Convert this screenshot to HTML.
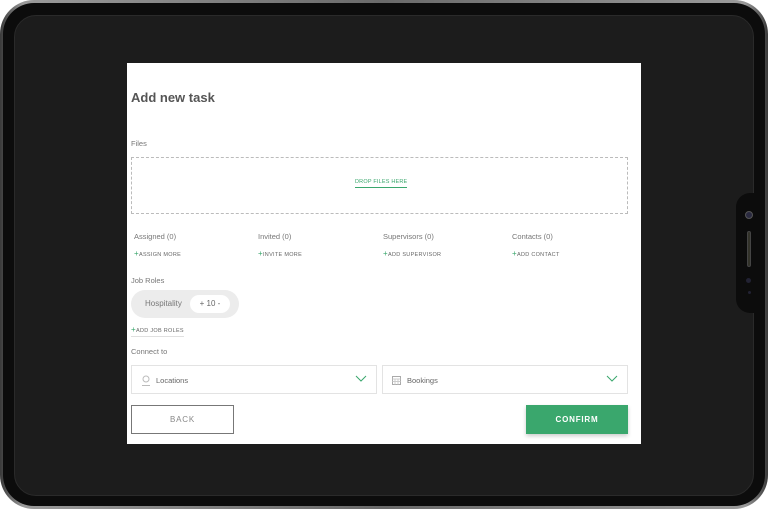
<!DOCTYPE html>
<html><head><meta charset="utf-8"><style>
*{margin:0;padding:0;box-sizing:border-box}
body{width:768px;height:509px;background:#fff;position:relative;overflow:hidden;font-family:"Liberation Sans",sans-serif}
.outer{position:absolute;left:0;top:0;width:768px;height:509px;border-radius:34px;background:linear-gradient(90deg,#3a3a3a,#9a9a9a 3%,#6a6a6a 50%,#9a9a9a 97%,#3a3a3a)}
.rim{position:absolute;left:3px;top:3px;right:3px;bottom:3px;border-radius:31px;background:#0c0c0c}
.inner{position:absolute;left:14px;top:15px;right:14px;bottom:13px;border-radius:22px;background:#1c1c1c;border:1px solid #2a2a2a}
.notch{position:absolute;left:736px;top:193px;width:26px;height:120px;background:#0c0c0c;border-radius:14px 0 0 14px}
.cam{position:absolute;left:745px;top:211px;width:8px;height:8px;border-radius:50%;background:#2a2a40;border:1px solid #555}
.bar{position:absolute;left:747px;top:231px;width:4px;height:36px;border-radius:2px;background:#33332a;border:1px solid #444}
.d1{position:absolute;left:746px;top:278px;width:5px;height:5px;border-radius:50%;background:#223}
.d2{position:absolute;left:748px;top:291px;width:3px;height:3px;border-radius:50%;background:#223}
.screen{position:absolute;left:127px;top:63px;width:514px;height:381px;background:#fff;color:#666}
.a{position:absolute;white-space:nowrap}
h1{position:absolute;left:4px;top:27px;font-size:13px;font-weight:bold;color:#555}
.lbl{font-size:7.5px;color:#777}
.drop{position:absolute;left:4px;top:94px;width:497px;height:57px;border:1px dashed #bbb}
.link{font-size:5.5px;color:#666;letter-spacing:.3px}
.link b{color:#3aa76d;font-weight:normal;font-size:8px}
.sel{position:absolute;top:302px;width:246px;height:29px;border:1px solid #e3e3e3;font-size:7.5px;color:#666}
.chev{position:absolute;right:9px;top:9px}
</style></head><body>
<div class="outer"></div><div class="rim"></div><div class="inner"></div>
<div class="notch"></div><div class="cam"></div><div class="bar"></div><div class="d1"></div><div class="d2"></div>
<div class="screen">
<h1>Add new task</h1>
<div class="a lbl" style="left:4px;top:76px">Files</div>
<div class="drop"></div>
<div class="a" style="left:228px;top:116px;font-size:5.5px;color:#3aa76d;border-bottom:1px solid #3aa76d;padding-bottom:2px;letter-spacing:.2px">DROP FILES HERE</div>
<div class="a lbl" style="left:7px;top:169px">Assigned (0)</div>
<div class="a lbl" style="left:131px;top:169px">Invited (0)</div>
<div class="a lbl" style="left:256px;top:169px">Supervisors (0)</div>
<div class="a lbl" style="left:385px;top:169px">Contacts (0)</div>
<div class="a link" style="left:7px;top:186px"><b>+</b>ASSIGN MORE</div>
<div class="a link" style="left:131px;top:186px"><b>+</b>INVITE MORE</div>
<div class="a link" style="left:256px;top:186px"><b>+</b>ADD SUPERVISOR</div>
<div class="a link" style="left:385px;top:186px"><b>+</b>ADD CONTACT</div>
<div class="a lbl" style="left:4px;top:213px">Job Roles</div>
<div class="a" style="left:4px;top:227px;width:108px;height:28px;border-radius:14px;background:#ececec"></div>
<div class="a" style="left:18px;top:236px;font-size:8px;color:#777">Hospitality</div>
<div class="a" style="left:63px;top:232px;width:40px;height:18px;border-radius:9px;background:#fff;font-size:8px;color:#666;text-align:center;line-height:18px">+ 10 -</div>
<div class="a link" style="left:4px;top:262px;border-bottom:1px solid #e0e0e0;padding-bottom:2px"><b>+</b>ADD JOB ROLES</div>
<div class="a lbl" style="left:4px;top:284px">Connect to</div>
<div class="sel" style="left:4px"><svg class="a" style="left:9px;top:9px" width="10" height="11" viewBox="0 0 10 11"><circle cx="5" cy="4" r="3" fill="none" stroke="#bbb"/><path d="M1 10.5h8" stroke="#bbb"/></svg><span class="a" style="left:24px;top:10px">Locations</span><svg class="chev" width="12" height="8"><path d="M1 1l5 5 5-5" fill="none" stroke="#3aa76d"/></svg></div>
<div class="sel" style="left:255px"><svg class="a" style="left:9px;top:9px" width="9" height="10"><rect x=".5" y="1.5" width="8" height="8" fill="none" stroke="#aaa"/><path d="M.5 4h8M3 4v5.5M6 4v5.5M.5 6.5h8" stroke="#ccc"/></svg><span class="a" style="left:24px;top:10px">Bookings</span><svg class="chev" width="12" height="8"><path d="M1 1l5 5 5-5" fill="none" stroke="#3aa76d"/></svg></div>
<div class="a" style="left:4px;top:342px;width:103px;height:29px;border:1px solid #777;font-size:8px;color:#888;text-align:center;line-height:27px;letter-spacing:.8px">BACK</div>
<div class="a" style="left:399px;top:342px;width:102px;height:29px;background:#3aa76d;font-size:8px;font-weight:bold;color:#fff;text-align:center;line-height:29px;letter-spacing:.8px;box-shadow:0 2px 4px rgba(0,0,0,.2)">CONFIRM</div>
</div>
</body></html>
